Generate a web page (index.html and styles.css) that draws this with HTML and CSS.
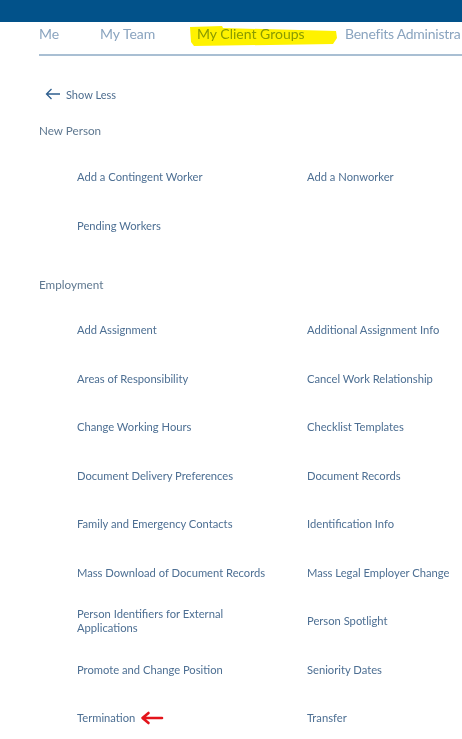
FILE: index.html
```html
<!DOCTYPE html>
<html>
<head>
<meta charset="utf-8">
<link rel="stylesheet" href="styles.css">
</head>
<body>
<div class="topbar"></div>
<nav class="tabs">
  <span class="tab tab-me">Me</span>
  <span class="tab tab-team">My Team</span>
  <span class="tab tab-active">My Client Groups</span>
  <span class="tab tab-ben">Benefits Administra</span>
  <svg class="highlight" width="150" height="24" viewBox="0 0 150 24"><path d="M0 2 L32 1 L33 3 L146 6 L147 13 L143 19 L4 21 L1 17 Z" fill="#fff200"/></svg>
</nav>
<main class="content">
  <div class="showless">
    <svg class="back" width="16" height="12" viewBox="0 0 16 12"><path d="M15 6 H1.5 M6.5 1 L1.5 6 L6.5 11" fill="none" stroke="#2f5f8f" stroke-width="1.3"/></svg>
    <span>Show Less</span>
  </div>
  <section class="group">
    <h2 class="group-title">New Person</h2>
    <div class="grid">
      <div class="item">Add a Contingent Worker</div>
      <div class="item">Add a Nonworker</div>
      <div class="item">Pending Workers</div>
    </div>
  </section>
  <section class="group group-emp">
    <h2 class="group-title">Employment</h2>
    <div class="grid">
      <div class="item">Add Assignment</div>
      <div class="item">Additional Assignment Info</div>
      <div class="item">Areas of Responsibility</div>
      <div class="item">Cancel Work Relationship</div>
      <div class="item">Change Working Hours</div>
      <div class="item">Checklist Templates</div>
      <div class="item">Document Delivery Preferences</div>
      <div class="item">Document Records</div>
      <div class="item">Family and Emergency Contacts</div>
      <div class="item">Identification Info</div>
      <div class="item">Mass Download of Document Records</div>
      <div class="item">Mass Legal Employer Change</div>
      <div class="item">Person Identifiers for External Applications</div>
      <div class="item">Person Spotlight</div>
      <div class="item">Promote and Change Position</div>
      <div class="item">Seniority Dates</div>
      <div class="item">Termination<svg class="redarrow" width="24" height="14" viewBox="0 0 24 14"><path d="M22 7 H3 M8.5 2 L2.5 7 L8.5 12" fill="none" stroke="#e3141b" stroke-width="2.6" stroke-linecap="round" stroke-linejoin="round"/></svg></div>
      <div class="item">Transfer</div>
    </div>
  </section>
</main>
</body>
</html>
```

FILE: styles.css
```css
* { box-sizing: border-box; }
html, body { margin: 0; padding: 0; background: #fff; }
body {
  font-family: "Lato", "Open Sans", sans-serif;
  width: 462px;
  height: 739px;
  overflow: hidden;
}
.topbar {
  height: 22px;
  background: #02528a;
}
.tabs {
  position: relative;
  display: flex;
  margin-left: 39px;
  height: 34px;
  border-bottom: 2px solid #a9bfd3;
  white-space: nowrap;
  overflow: hidden;
}
.tab {
  display: block;
  flex-shrink: 0;
  font-size: 14px;
  color: #8aa4bf;
  padding-top: 2px;
  line-height: 20px;
  height: 34px;
}
.tab-me { width: 61px; }
.tab-team { width: 97px; }
.tab-active {
  width: 131px;
  border-bottom: 2px solid #1a5a8c;
  margin-right: 17px;
}
.tab-ben { width: 116px; letter-spacing: -0.25px; }
.highlight {
  position: absolute;
  left: 151px;
  top: 3px;
  mix-blend-mode: multiply;
}
.content {
  padding-left: 39px;
}
.showless {
  display: flex;
  align-items: center;
  height: 18px;
  margin-top: 29px;
  padding-left: 6px;
  font-size: 11px;
  color: #4d6d8f;
}
.back { margin-right: 5px; }
.group-title {
  margin: 18px 0 0;
  font-size: 11.7px;
  font-weight: normal;
  color: #5f7890;
  line-height: 18px;
}
.group-emp .group-title { margin-top: 25px; }
.grid {
  display: grid;
  grid-template-columns: 230px 1fr;
  margin-left: 38px;
  margin-top: 14px;
  grid-auto-rows: 48.5px;
}
.group-emp .grid { margin-top: 13px; }
.item {
  display: flex;
  align-items: center;
  font-size: 11.2px;
  line-height: 14px;
  color: #4d6f93;
}
.item:nth-child(odd) { padding-right: 30px; }
.item:nth-child(even) { white-space: nowrap; }
.redarrow {
  margin-left: 5px;
  flex-shrink: 0;
}
```
